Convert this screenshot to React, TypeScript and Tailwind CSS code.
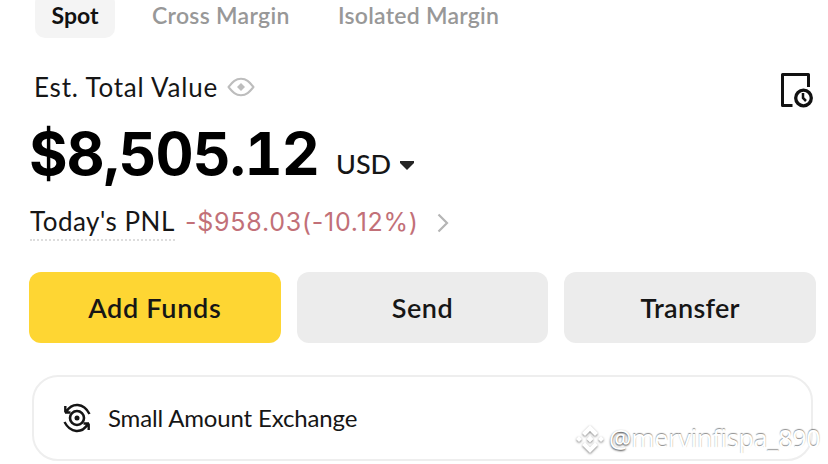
function EyeIcon() {
  return (
    <svg viewBox="0 0 28 20" fill="none" stroke="#bdbdbd" strokeWidth="2" strokeLinejoin="round" className="w-7 h-5">
      <path d="M1.500 10C6 4.500 8.500 1.800 14 1.800S22 4.500 26.500 10C22 15.500 19.500 18.200 14 18.200S6 15.500 1.500 10Z" />
      <path d="M14 6L18 10L14 14L10 10Z" fill="#bdbdbd" stroke="none" />
    </svg>
  )
}

function HistoryIcon() {
  return (
    <svg viewBox="0 0 34 36" fill="none" stroke="#111111" strokeWidth="3" className="w-[34px] h-9">
      <path d="M13.500 33.500H3.500V2.500H29.500V15" strokeLinejoin="round" />
      <circle cx="24.500" cy="26" r="7.800" strokeWidth="3.300" />
      <path d="M24 21V26L27 29" strokeWidth="2.500" />
    </svg>
  )
}

function ExchangeIcon() {
  return (
    <svg viewBox="0 0 28 30" fill="none" stroke="#151515" strokeWidth="2.400" className="w-7 h-[30px]">
      <path d="M2.300 3V9.500M2 9.500H7.500M3.500 8.500C9 -0.500 20.500 -0.500 26.500 11" />
      <path d="M25.700 27V20.500M26 20.500H20.500M24.500 21.500C19 30.500 7.500 30.500 1.500 19" />
      <circle cx="14" cy="15" r="7" strokeWidth="2.600" />
      <circle cx="14" cy="15" r="2.500" fill="#151515" stroke="none" />
    </svg>
  )
}

function BinanceMark() {
  return (
    <svg viewBox="0 0 28 28" fill="#ffffff" className="w-7 h-7 drop-shadow-[0_1px_1px_rgba(0,0,0,0.5)]">
      <path d="M14 0L22 8L19 11L14 6L9 11L6 8Z" />
      <path d="M14 28L22 20L19 17L14 22L9 17L6 20Z" />
      <path d="M3 11L6 14L3 17L0 14ZM25 11L28 14L25 17L22 14ZM14 10.500L17.500 14L14 17.500L10.500 14Z" />
    </svg>
  )
}

export default function App() {
  const actions = [
    { label: "Add Funds", className: "bg-[#fed633] tracking-[0.700px]" },
    { label: "Send", className: "bg-[#ececec] tracking-[0.500px]" },
    { label: "Transfer", className: "bg-[#ececec] tracking-[0.300px]" },
  ]

  return (
    <div className="relative h-[464px] w-[828px] overflow-hidden bg-white pt-px font-['Lato',sans-serif] text-[#161616]">
      <div className="-mt-2 ml-[35px] flex h-[45px] items-start whitespace-nowrap text-[23px] font-semibold text-[#989898]">
        <div className="flex h-[45px] w-20 items-center justify-center rounded-[10px] bg-[#f4f4f4] font-bold text-[#111111]">Spot</div>
        <div className="ml-[37px] flex h-[45px] w-[138px] items-center tracking-[0.300px]">Cross Margin</div>
        <div className="ml-12 flex h-[45px] items-center tracking-[0.250px]">Isolated Margin</div>
      </div>

      <div className="mt-[31px] flex h-9 items-center pr-[15px] pl-[34px]">
        <div className="w-[184px] text-[26px] tracking-[0.800px] whitespace-nowrap">Est. Total Value</div>
        <div className="ml-[9px]">
          <EyeIcon />
        </div>
        <div className="mt-1.5 ml-auto">
          <HistoryIcon />
        </div>
      </div>

      <div className="mt-[13px] flex h-[72px] items-center pl-[29px]">
        <div className="w-[291px] font-['Inter',sans-serif] text-[59px] font-bold tracking-[-1.050px] tabular-nums text-black">$8,505.12</div>
        <div className="mt-5 ml-4 w-[55px] text-[27px] font-medium">USD</div>
        <svg viewBox="0 0 14 9" fill="#252525" className="mt-[22px] ml-[9px] h-[9px] w-3.5">
          <path d="M0 0H14V2L7 9L0 2Z" />
        </svg>
      </div>

      <div className="mt-[13px] flex h-[38px] items-center pl-[30px] text-[26px] whitespace-nowrap">
        <div className="flex h-[38px] w-[145px] items-center border-b-2 border-dotted border-[#dddddd] tracking-[0.500px]">Today's PNL</div>
        <div className="mt-px ml-2.5 w-[234px] font-['Inter',sans-serif] text-[25px] tracking-[0.750px] text-[#c27078]">-$958.03(-10.12%)</div>
        <svg viewBox="0 0 12 20" fill="none" stroke="#b5b5b5" strokeWidth="2.200" className="mt-px ml-[18px] h-5 w-3">
          <path d="M1.500 1.500L10 10L1.500 18.500" />
        </svg>
      </div>

      <div className="mt-[31px] ml-[29px] grid h-[71px] w-[787px] grid-cols-3 gap-4">
        {actions.map((action) => (
          <button
            key={action.label}
            className={`rounded-xl pt-0.5 text-[27px] font-semibold text-[#161616] ${action.className}`}
          >
            {action.label}
          </button>
        ))}
      </div>

      <div className="mt-8 ml-8 flex h-[86px] w-[781px] items-center rounded-[26px] border-2 border-[#eeeeee] pl-[29px]">
        <ExchangeIcon />
        <div className="ml-[17px] text-2xl tracking-[-0.150px]">Small Amount Exchange</div>
      </div>

      <div className="absolute top-[425px] left-[576px] flex h-7 items-center text-white">
        <BinanceMark />
        <div className="ml-[5px] font-['Noto_Sans',sans-serif] text-[25px] tracking-[-0.250px] whitespace-nowrap [text-shadow:0_-1px_1px_rgba(0,0,0,0.45)]">
          <span className="[text-shadow:0_1px_2px_rgba(0,0,0,0.8)]">@</span>mervinfispa_890
        </div>
      </div>
    </div>
  )
}
